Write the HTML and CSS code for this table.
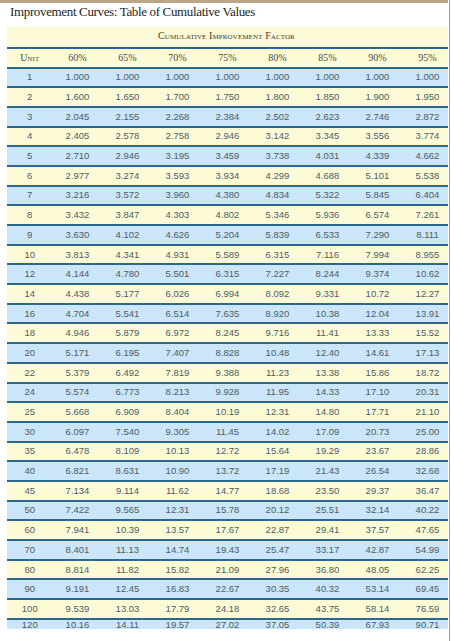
FILE: index.html
```html
<!DOCTYPE html>
<html>
<head>
<meta charset="utf-8">
<link rel="stylesheet" href="styles.css">
</head>
<body>
<div class="page">
  <div class="topbar"></div>
  <h1 class="title">Improvement Curves: Table of Cumulative Values</h1>
  <div class="table-wrap" role="table">
    <div class="band">Cumulative Improvement Factor</div>
    <div class="row head" role="row">
      <div class="cell unit-h">Unit</div>
      <div class="cell">60%</div><div class="cell">65%</div><div class="cell">70%</div><div class="cell">75%</div>
      <div class="cell">80%</div><div class="cell">85%</div><div class="cell">90%</div><div class="cell">95%</div>
    </div>
    <div id="rows"></div>
  </div>
</div>
<script src="app.js"></script>
</body>
</html>
```
FILE: styles.css
```css
html, body {
  margin: 0;
  padding: 0;
  background: #ffffff;
}
.page {
  width: 449px;
  min-height: 641px;
  border-right: 1px solid #9a9a9a;
  background: #ffffff;
}
.topbar {
  height: 3px;
  margin-right: 1px;
  background: #b7a785;
}
.title {
  margin: 0;
  height: 24px;
  padding-left: 10px;
  font-family: "Liberation Serif", "Times New Roman", serif;
  font-weight: normal;
  font-size: 13px;
  letter-spacing: -0.35px;
  line-height: 18px;
  color: #1e1e1e;
  white-space: nowrap;
}
.table-wrap {
  margin-left: 7px;
  width: 441px;
  overflow: hidden;
}
.band {
  height: 20px;
  box-sizing: border-box;
  background: #fdfad6;
  padding-left: 151px;
  font-family: "Liberation Serif", "Times New Roman", serif;
  font-variant: small-caps;
  font-size: 10px;
  letter-spacing: 0.1px;
  color: #3b3a2e;
  line-height: 18px;
  white-space: nowrap;
}
.row {
  display: grid;
  grid-template-columns: 45.5px repeat(8, 50px);
  width: 445.5px;
  height: 17.7px;
  border-top: 2px solid #2a6890;
  align-items: center;
  font-family: "Liberation Sans", Arial, sans-serif;
  font-size: 9.5px;
  color: #4e5c66;
  line-height: 12px;
}
.cell {
  text-align: center;
  white-space: nowrap;
}
.head {
  height: 17.5px;
  background: #fdfad6;
  font-family: "Liberation Serif", "Times New Roman", serif;
  font-size: 10px;
  color: #4d4a3c;
}
.unit-h {
  font-variant: small-caps;
}
.row-odd { background: #cae6f8; }
.row-even { background: #fdfad6; }
.row-last {
  height: 9px;
  align-items: start;
  line-height: 9px;
}
```
FILE: app.js
```js
const data = [
  ["1","1.000","1.000","1.000","1.000","1.000","1.000","1.000","1.000"],
  ["2","1.600","1.650","1.700","1.750","1.800","1.850","1.900","1.950"],
  ["3","2.045","2.155","2.268","2.384","2.502","2.623","2.746","2.872"],
  ["4","2.405","2.578","2.758","2.946","3.142","3.345","3.556","3.774"],
  ["5","2.710","2.946","3.195","3.459","3.738","4.031","4.339","4.662"],
  ["6","2.977","3.274","3.593","3.934","4.299","4.688","5.101","5.538"],
  ["7","3.216","3.572","3.960","4.380","4.834","5.322","5.845","6.404"],
  ["8","3.432","3.847","4.303","4.802","5.346","5.936","6.574","7.261"],
  ["9","3.630","4.102","4.626","5.204","5.839","6.533","7.290","8.111"],
  ["10","3.813","4.341","4.931","5.589","6.315","7.116","7.994","8.955"],
  ["12","4.144","4.780","5.501","6.315","7.227","8.244","9.374","10.62"],
  ["14","4.438","5.177","6.026","6.994","8.092","9.331","10.72","12.27"],
  ["16","4.704","5.541","6.514","7.635","8.920","10.38","12.04","13.91"],
  ["18","4.946","5.879","6.972","8.245","9.716","11.41","13.33","15.52"],
  ["20","5.171","6.195","7.407","8.828","10.48","12.40","14.61","17.13"],
  ["22","5.379","6.492","7.819","9.388","11.23","13.38","15.86","18.72"],
  ["24","5.574","6.773","8.213","9.928","11.95","14.33","17.10","20.31"],
  ["25","5.668","6.909","8.404","10.19","12.31","14.80","17.71","21.10"],
  ["30","6.097","7.540","9.305","11.45","14.02","17.09","20.73","25.00"],
  ["35","6.478","8.109","10.13","12.72","15.64","19.29","23.67","28.86"],
  ["40","6.821","8.631","10.90","13.72","17.19","21.43","26.54","32.68"],
  ["45","7.134","9.114","11.62","14.77","18.68","23.50","29.37","36.47"],
  ["50","7.422","9.565","12.31","15.78","20.12","25.51","32.14","40.22"],
  ["60","7.941","10.39","13.57","17.67","22.87","29.41","37.57","47.65"],
  ["70","8.401","11.13","14.74","19.43","25.47","33.17","42.87","54.99"],
  ["80","8.814","11.82","15.82","21.09","27.96","36.80","48.05","62.25"],
  ["90","9.191","12.45","16.83","22.67","30.35","40.32","53.14","69.45"],
  ["100","9.539","13.03","17.79","24.18","32.65","43.75","58.14","76.59"],
  ["120","10.16","14.11","19.57","27.02","37.05","50.39","67.93","90.71"]
];
const body = document.getElementById("rows");
data.forEach((row, i) => {
  const r = document.createElement("div");
  r.className = "row " + (i % 2 === 0 ? "row-odd" : "row-even") + (i === data.length - 1 ? " row-last" : "");
  r.setAttribute("role", "row");
  row.forEach(v => {
    const c = document.createElement("div");
    c.className = "cell";
    c.textContent = v;
    r.appendChild(c);
  });
  body.appendChild(r);
});
```
